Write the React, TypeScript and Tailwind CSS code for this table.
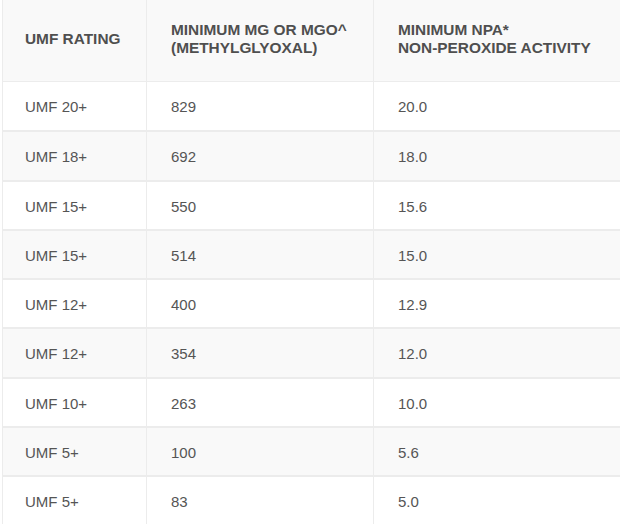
const rows = [
  ['UMF 20+', '829', '20.0'],
  ['UMF 18+', '692', '18.0'],
  ['UMF 15+', '550', '15.6'],
  ['UMF 15+', '514', '15.0'],
  ['UMF 12+', '400', '12.9'],
  ['UMF 12+', '354', '12.0'],
  ['UMF 10+', '263', '10.0'],
  ['UMF 5+', '100', '5.6'],
  ['UMF 5+', '83', '5.0'],
];

export default function App() {
  return (
    <div className="w-[620px] h-[524px] overflow-hidden bg-white font-['Liberation_Sans',Arial,sans-serif]">
      <table className="ml-[2px] w-[640px] table-fixed border-separate border-spacing-0 text-[15px] leading-[18px] text-[#555]">
        <colgroup>
          <col className="w-[145px]" />
          <col className="w-[227px]" />
          <col />
        </colgroup>
        <thead>
          <tr className="bg-[#f9f9f9] text-left text-[15.4px] font-bold uppercase text-[#4f4f4f]">
            <th className="h-[82px] border-l border-b border-r border-[#ececec] pl-[22px] pb-[3px] align-middle">UMF Rating</th>
            <th className="h-[82px] border-b border-r border-[#ececec] pl-[24px] pb-[3px] align-middle">
              Minimum MG or MGO^
              <br />
              (Methylglyoxal)
            </th>
            <th className="h-[82px] border-b border-[#ececec] pl-[24px] pb-[3px] align-middle">
              Minimum NPA*
              <br />
              Non-Peroxide Activity
            </th>
          </tr>
        </thead>
        <tbody>
          {rows.map((r, i) => (
            <tr key={i} className={i % 2 === 1 ? 'bg-[#f9f9f9]' : 'bg-white'}>
              <td className={`h-[49.3px] align-top pt-[16px] border-l border-r border-b border-[#ececec] pl-[22px] ${i > 0 ? 'border-t' : ''}`}>{r[0]}</td>
              <td className={`h-[49.3px] align-top pt-[16px] border-r border-b border-[#ececec] pl-[24px] ${i > 0 ? 'border-t' : ''}`}>{r[1]}</td>
              <td className={`h-[49.3px] align-top pt-[16px] border-b border-[#ececec] pl-[24px] ${i > 0 ? 'border-t' : ''}`}>{r[2]}</td>
            </tr>
          ))}
        </tbody>
      </table>
    </div>
  );
}
